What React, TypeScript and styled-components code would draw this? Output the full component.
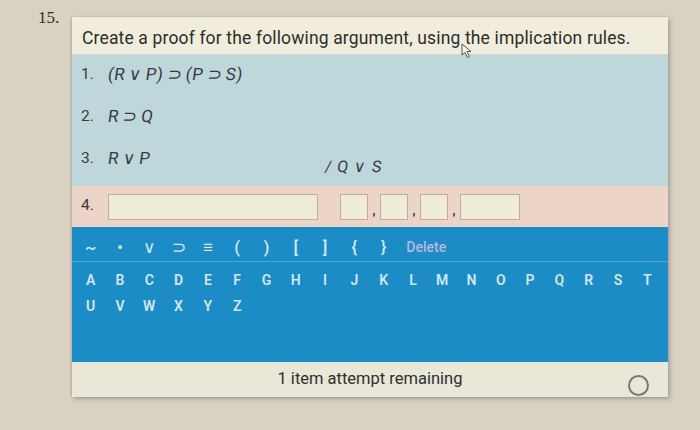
import styled, { createGlobalStyle } from 'styled-components'

const GlobalStyle = createGlobalStyle`
  html, body {
    margin: 0;
    padding: 0;
    background: #d9d2c2;
  }
  body {
    font-family: Roboto, "Liberation Sans", sans-serif;
  }
`

const symbols = ['~', '•', '∨', '⊃', '≡', '(', ')', '[', ']', '{', '}']
const lettersTop = 'ABCDEFGHIJKLMNOPQRST'.split('')
const lettersBottom = 'UVWXYZ'.split('')

const premises = [
  { n: '1.', text: '(R ∨ P) ⊃ (P ⊃ S)' },
  { n: '2.', text: 'R ⊃ Q' },
  { n: '3.', text: 'R ∨ P', conclusion: '/ Q ∨ S' },
]

export default function App() {
  return (
    <>
      <GlobalStyle />
      <Page>
        <QuestionNumber>15.</QuestionNumber>
        <Card>
          <TitleBar>
            Create a proof for the following argument, using the implication rules.
            <Cursor viewBox="0 0 12 16" width="12" height="16">
              <path
                d="M1 1 L1 12 L4 9.5 L6.5 14.5 L8.5 13.5 L6 8.5 L10 8.5 Z"
                fill="#f4f2e6"
                stroke="#555"
                strokeWidth="1"
                strokeLinejoin="round"
              />
            </Cursor>
          </TitleBar>

          <Premises>
            {premises.map((p) => (
              <PremiseRow key={p.n}>
                <LineNum>{p.n}</LineNum>
                <Formula>{p.text}</Formula>
                {p.conclusion && <Conclusion>{p.conclusion}</Conclusion>}
              </PremiseRow>
            ))}
          </Premises>

          <AnswerRow>
            <LineNum $raised>4.</LineNum>
            <TextBox $width={210} />
            <Justification>
              <TextBox $width={28} />
              <Comma>,</Comma>
              <TextBox $width={28} />
              <Comma>,</Comma>
              <TextBox $width={28} />
              <Comma>,</Comma>
              <TextBox $width={60} />
            </Justification>
          </AnswerRow>

          <Keyboard>
            <SymbolRow>
              {symbols.map((s) => (
                <Key key={s} $symbol>
                  {s}
                </Key>
              ))}
              <DeleteKey>Delete</DeleteKey>
            </SymbolRow>
            <LetterGrid>
              {lettersTop.map((l) => (
                <Key key={l}>{l}</Key>
              ))}
              {lettersBottom.map((l) => (
                <Key key={l}>{l}</Key>
              ))}
            </LetterGrid>
          </Keyboard>

          <Footer>
            <span>1 item attempt remaining</span>
            <StatusCircle />
          </Footer>
        </Card>
      </Page>
    </>
  )
}

const Page = styled.div`
  width: 700px;
  height: 430px;
  box-sizing: border-box;
  padding: 8px 0 0 38px;
  display: flex;
  align-items: flex-start;
  overflow: hidden;
`

const QuestionNumber = styled.div`
  width: 34px;
  font-family: "Liberation Serif", serif;
  font-size: 17px;
  line-height: 20px;
  color: #2e2e2e;
`

const Card = styled.section`
  margin-top: 9px;
  width: 596px;
  display: flex;
  flex-direction: column;
  box-shadow: 2px 2px 4px rgba(70, 60, 90, 0.35), -1px 0 2px rgba(0, 0, 0, 0.15);
`

const TitleBar = styled.div`
  position: relative;
  height: 38px;
  box-sizing: border-box;
  padding: 10px 0 0 10px;
  background: #f0eddc;
  font-size: 17.5px;
  letter-spacing: 0.15px;
  line-height: 22px;
  color: #2d2d2d;
  white-space: nowrap;
  border-bottom: 1px solid #cfd6cf;
`

const Cursor = styled.svg`
  position: absolute;
  left: 389px;
  top: 26px;
`

const Premises = styled.div`
  background: #bdd7da;
  display: flex;
  flex-direction: column;
  gap: 4px;
  padding-bottom: 9px;
`

const PremiseRow = styled.div`
  height: 38px;
  display: flex;
  align-items: center;
  position: relative;
`

const LineNum = styled.span<{ $raised?: boolean }>`
  width: 36px;
  padding-left: 9px;
  box-sizing: border-box;
  font-size: 15.5px;
  color: #3a3a3a;
  margin-bottom: ${(p) => (p.$raised ? '4px' : '0')};
`

const Formula = styled.span`
  font-size: 17px;
  transform: skewX(-8deg);
  color: #3a3a44;
  letter-spacing: 0.6px;
  word-spacing: -1px;
`

const Conclusion = styled(Formula)`
  position: absolute;
  left: 253px;
  top: 18px;
  font-size: 16px;
  letter-spacing: 1.4px;
`

const AnswerRow = styled.div`
  height: 41px;
  background: #ecd4c7;
  display: flex;
  align-items: center;
  box-sizing: border-box;
`

const TextBox = styled.div<{ $width: number }>`
  width: ${(p) => p.$width}px;
  height: 26px;
  box-sizing: border-box;
  background: #eeecd6;
  border: 1px solid #c7aa9c;
`

const Justification = styled.div`
  margin-left: 22px;
  display: flex;
  align-items: center;
`

const Comma = styled.span`
  width: 12px;
  text-align: center;
  font-size: 12px;
  font-weight: 700;
  color: #333;
  padding-top: 8px;
`

const Keyboard = styled.div`
  height: 135px;
  background: #1b8cc5;
  display: flex;
  flex-direction: column;
`

const SymbolRow = styled.div`
  height: 35px;
  box-sizing: border-box;
  padding: 5px 0 0 4px;
  display: flex;
  align-items: center;
  border-bottom: 1px solid rgba(200, 230, 250, 0.3);
`

const Key = styled.span<{ $symbol?: boolean }>`
  width: 29.3px;
  text-align: center;
  font-size: ${(p) => (p.$symbol ? '17px' : '14px')};
  font-weight: ${(p) => (p.$symbol ? 500 : 600)};
  color: #d4e6f1;
  line-height: 26px;
`

const DeleteKey = styled.span`
  margin-left: 8px;
  font-size: 14px;
  font-weight: 500;
  color: #b9b8e2;
`

const LetterGrid = styled.div`
  padding: 5px 0 0 4px;
  display: grid;
  grid-template-columns: repeat(20, 29.3px);
`

const Footer = styled.div`
  height: 35px;
  background: #e9e7d7;
  display: flex;
  align-items: center;
  justify-content: center;
  position: relative;
  font-size: 16.5px;
  color: #2f2f2f;
  padding-bottom: 2px;
  box-sizing: border-box;
`

const StatusCircle = styled.span`
  position: absolute;
  right: 19px;
  top: 13px;
  width: 17px;
  height: 17px;
  border: 2px solid #777;
  border-radius: 50%;
`
